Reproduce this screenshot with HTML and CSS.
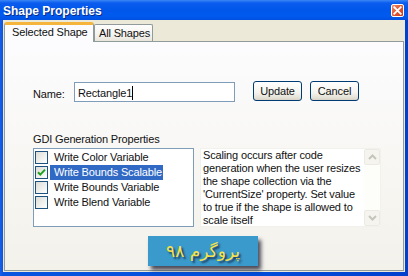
FILE: index.html
```html
<!DOCTYPE html>
<html>
<head>
<meta charset="utf-8">
<link rel="stylesheet" href="styles.css">
</head>
<body>
<div class="window">
  <div class="titlebar">
    <span class="title">Shape Properties</span>
    <span class="close"><svg width="9" height="9" viewBox="0 0 9 9"><path d="M1.2 1.2L7.8 7.8M7.8 1.2L1.2 7.8" stroke="#fff" stroke-width="1.8" stroke-linecap="square"/></svg></span>
  </div>
  <div class="client">
    <div class="tabs">
      <div class="tab active">Selected Shape</div>
      <div class="tab">All Shapes</div>
    </div>
    <div class="panel">
      <div class="name-row">
        <span class="lbl">Name:</span>
        <div class="input">Rectangle1<span class="caret"></span></div>
        <div class="btn">Update</div>
        <div class="btn btn2">Cancel</div>
      </div>
      <div class="group-label">GDI Generation Properties</div>
      <div class="lists">
        <div class="checklist">
          <div class="item"><span class="cb"></span><span class="txt">Write Color Variable</span></div>
          <div class="item sel"><span class="cb"><svg width="9" height="9" viewBox="0 0 9 9"><path d="M1 4.2L3.3 6.6L8 1.6" fill="none" stroke="#21a121" stroke-width="2"/></svg></span><span class="txt">Write Bounds Scalable</span></div>
          <div class="item"><span class="cb"></span><span class="txt">Write Bounds Variable</span></div>
          <div class="item"><span class="cb"></span><span class="txt">Write Blend Variable</span></div>
        </div>
        <div class="desc">
          <div class="desc-text">Scaling occurs after code<br>generation when the user resizes<br>the shape collection via the<br>'CurrentSize' property. Set value<br>to true if the shape is allowed to<br>scale itself</div>
          <div class="scroll">
            <div class="sbtn"><svg width="9" height="6" viewBox="0 0 9 6"><path d="M1 5L4.5 1.5L8 5" fill="none" stroke="#c6c5bd" stroke-width="2"/></svg></div>
            <div class="track"></div>
            <div class="sbtn"><svg width="9" height="6" viewBox="0 0 9 6"><path d="M1 1L4.5 4.5L8 1" fill="none" stroke="#c6c5bd" stroke-width="2"/></svg></div>
          </div>
        </div>
      </div>
      <div class="watermark">پروگرم ۹۸</div>
    </div>
  </div>
</div>
</body>
</html>
```
FILE: styles.css
```css
html, body { margin: 0; padding: 0; }
body { width: 408px; height: 276px; overflow: hidden; font-family: "Liberation Sans", Arial, sans-serif; font-size: 11px; letter-spacing: -0.15px; color: #111; }
.window {
  width: 408px; height: 276px; box-sizing: border-box;
  display: flex; flex-direction: column;
  background: linear-gradient(to right, #1a5ee6 0, #0a55e0 3px, #0451dd 50%, #0040cf 100%);
}
.titlebar {
  height: 20px; flex: none; position: relative;
  display: flex; align-items: center;
  background: linear-gradient(to bottom, #3b86f5 0, #0a5cee 3px, #0057ea 10px, #005aef 16px, #0050e0 20px);
}
.title { margin-left: 3px; margin-top: 1px; color: #fff; font-weight: bold; font-size: 12px; letter-spacing: 0; text-shadow: 1px 1px 0 #0a2a8a; }
.close {
  position: absolute; left: 391px; top: 4px; width: 13px; height: 13px; box-sizing: border-box;
  border: 1px solid #fff; border-radius: 2px;
  background: linear-gradient(135deg, #f08a6a 0, #e35b36 45%, #c83c18 100%);
  display: flex; align-items: center; justify-content: center;
}
.close svg { display: block; }
.client {
  flex: 1; margin: 0 3px 4px 3px; background: #ece9d8;
  display: flex; flex-direction: column;
}
.tabs { height: 21px; flex: none; display: flex; align-items: flex-start; position: relative; z-index: 2; }
.tab {
  box-sizing: border-box; margin-top: 4px; height: 17px; width: 59px; padding-left: 4px;
  border: 1px solid #919b9c; border-bottom: none; border-radius: 2px 2px 0 0;
  background: linear-gradient(#fefefe, #f4f3ee 60%, #e8e6dc);
  line-height: 17px; white-space: nowrap;
}
.tab.active {
  margin-top: 2px; margin-left: 1px; height: 20px; width: 90px; padding-left: 7px;
  background: #fcfcfe; border-top: 3px solid #f5b53c; border-radius: 3px 3px 0 0;
  line-height: 15px; border-right: 1px solid #919b9c;
}
.panel {
  flex: 1; margin: 0 1px 1px 1px; border: 1px solid #919b9c;
  background: linear-gradient(#fcfcfe, #f7f6f2 60%, #f2f1ea);
  padding: 39px 0 0 28px;
}
.name-row { display: flex; align-items: flex-start; height: 21px; }
.lbl { width: 41px; line-height: 18px; margin-top: 4px; }
.input {
  box-sizing: border-box; width: 161px; height: 20px; margin-top: 1px;
  border: 1px solid #7f9db9; background: #fff; padding-left: 3px; padding-top: 1px;
  line-height: 18px; display: flex; align-items: center;
}
.caret { display: inline-block; width: 1px; height: 14px; background: #000; margin-left: 0; }
.btn {
  box-sizing: border-box; width: 49px; height: 20px; margin-left: 18px;
  border: 1px solid #003c74; border-radius: 3px;
  background: linear-gradient(#ffffff, #f4f3ee 60%, #e3dfd3 90%, #d6d0c5);
  text-align: center; line-height: 18px;
}
.btn2 { margin-left: 8px; }
.group-label { margin-top: 31px; line-height: 13px; }
.lists { margin-top: 2px; display: flex; gap: 6px; }
.checklist {
  box-sizing: border-box; width: 161px; height: 79px;
  border: 1px solid #7f9db9; background: #fff; padding-top: 1px;
}
.item { height: 15px; display: flex; align-items: center; }
.cb {
  box-sizing: border-box; width: 13px; height: 13px; margin-left: 1px;
  border: 1px solid #1c5180; background: linear-gradient(135deg, #dcdcd7, #fff);
  display: flex; align-items: center; justify-content: center;
}
.cb svg { display: block; }
.txt { margin-left: 2px; padding: 0 1px 0 4px; line-height: 15px; white-space: nowrap; }
.sel .txt { background: #316ac5; color: #fff; }
.desc {
  box-sizing: border-box; width: 181px; height: 79px;
  background: #fff; border: 1px solid #f2f1ec;
  display: flex;
}
.desc-text { flex: 1; padding-left: 2px; line-height: 13px; white-space: nowrap; overflow: hidden; }
.scroll { width: 16px; display: flex; flex-direction: column; background: #fdfdfa; }
.sbtn {
  box-sizing: border-box; height: 16px; border: 1px solid #ebeae3; border-radius: 2px;
  background: #f5f4ee; display: flex; align-items: center; justify-content: center;
}
.sbtn svg { display: block; }
.track { flex: 1; }
.watermark {
  margin-top: 9px; margin-left: 115px; width: 110px; height: 30px;
  background: #3a9acb; box-shadow: 3px 4px 4px rgba(20,20,40,0.75);
  color: #f7e34a; font-family: "DejaVu Sans", sans-serif; font-size: 17px; font-weight: normal; letter-spacing: 0;
  text-align: center; line-height: 30px; direction: rtl;
  text-shadow: 2px 2px 2px #1a3050;
}
```
